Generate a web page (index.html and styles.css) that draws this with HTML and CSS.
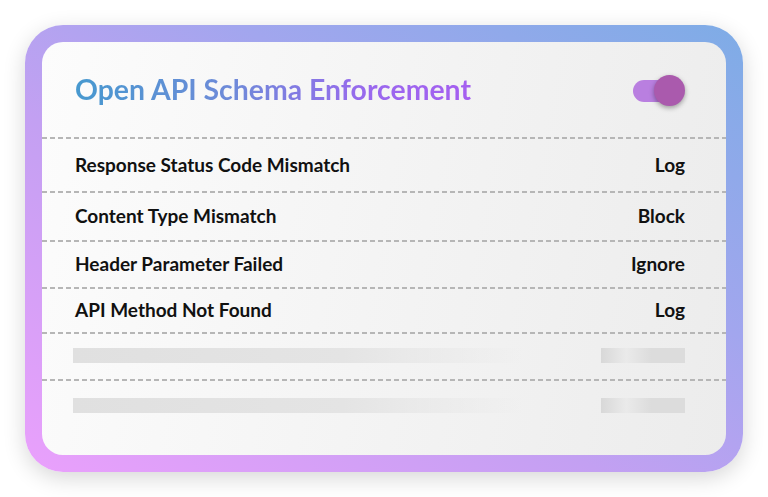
FILE: index.html
```html
<!DOCTYPE html>
<html lang="en">
<head>
<meta charset="utf-8">
<title>Open API Schema Enforcement</title>
<link rel="stylesheet" href="styles.css">
</head>
<body>
<div class="frame">
  <div class="card">
    <div class="header">
      <h1 class="title">Open API Schema Enforcement</h1>
      <div class="toggle"><span class="track"></span><span class="knob"></span></div>
    </div>
    <div class="row"><span class="label">Response Status Code Mismatch</span><span class="action">Log</span></div>
    <div class="row"><span class="label">Content Type Mismatch</span><span class="action">Block</span></div>
    <div class="row"><span class="label">Header Parameter Failed</span><span class="action">Ignore</span></div>
    <div class="row"><span class="label">API Method Not Found</span><span class="action">Log</span></div>
    <div class="row placeholder"><span class="bar-left"></span><span class="bar-right"></span></div>
    <div class="row placeholder last"><span class="bar-left"></span><span class="bar-right"></span></div>
  </div>
</div>
</body>
</html>
```

FILE: styles.css
```css
html, body {
  margin: 0;
  padding: 0;
  background: #ffffff;
  font-family: Lato, "Open Sans", "Liberation Sans", sans-serif;
}

body {
  width: 768px;
  height: 497px;
  overflow: hidden;
}

.frame {
  margin: 25px 0 0 25px;
  width: 718px;
  height: 447px;
  box-sizing: border-box;
  padding: 17px;
  border-radius: 38px;
  background: linear-gradient(to top right, #eaa0fc 0%, #c3a0f2 40%, #a2a6ee 65%, #7eace6 100%);
  box-shadow: 0 6px 22px rgba(0, 0, 0, 0.16);
}

.card {
  height: 100%;
  border-radius: 21px;
  background: linear-gradient(100deg, #fcfcfc 0%, #f3f3f3 55%, #ececec 100%);
  display: grid;
  grid-template-rows: 95px 54px 49px 47px 45px 47px 1fr;
  overflow: hidden;
}

.header {
  display: flex;
  align-items: center;
  justify-content: space-between;
  padding: 0 41px 0 33px;
}

.title {
  margin: 4px 0 0 0;
  font-size: 28.4px;
  font-weight: 700;
  letter-spacing: 0;
  background: linear-gradient(90deg, #4799cf 0%, #6f8ad9 40%, #9a68ee 75%, #a55ff0 100%);
  -webkit-background-clip: text;
  background-clip: text;
  color: transparent;
  line-height: 1;
  padding-bottom: 4px;
}

.toggle {
  position: relative;
  width: 52px;
  height: 30px;
  margin-top: 3px;
}

.track {
  position: absolute;
  left: 0;
  top: 4px;
  width: 40px;
  height: 22px;
  border-radius: 11px;
  background: #b97fe0;
}

.knob {
  position: absolute;
  right: 0;
  top: -1px;
  width: 31px;
  height: 31px;
  border-radius: 50%;
  background: #aa5aad;
  box-shadow: 0 2px 5px rgba(0, 0, 0, 0.35);
}

.row {
  display: flex;
  align-items: center;
  justify-content: space-between;
  padding: 0 41px 0 33px;
  background-image: repeating-linear-gradient(90deg, #b6b6b6 0 5px, transparent 5px 8px);
  background-size: 100% 2px;
  background-repeat: no-repeat;
  background-position: 0 0;
  font-size: 19px;
  font-weight: 700;
  color: #111111;
}

.label, .action {
  line-height: 1;
}

.placeholder {
  padding-left: 31px;
}

.placeholder.last {
  align-items: flex-start;
  padding-top: 19px;
}

.bar-left {
  width: 450px;
  height: 15px;
  background: linear-gradient(90deg, #e0e0e0 0%, #e4e4e4 60%, rgba(236,236,236,0) 100%);
}

.bar-right {
  width: 84px;
  height: 15px;
  background: linear-gradient(90deg, #d8d8d8 0%, #eaeaea 30%, #dcdcdc 60%, #dcdcdc 100%);
}
```
